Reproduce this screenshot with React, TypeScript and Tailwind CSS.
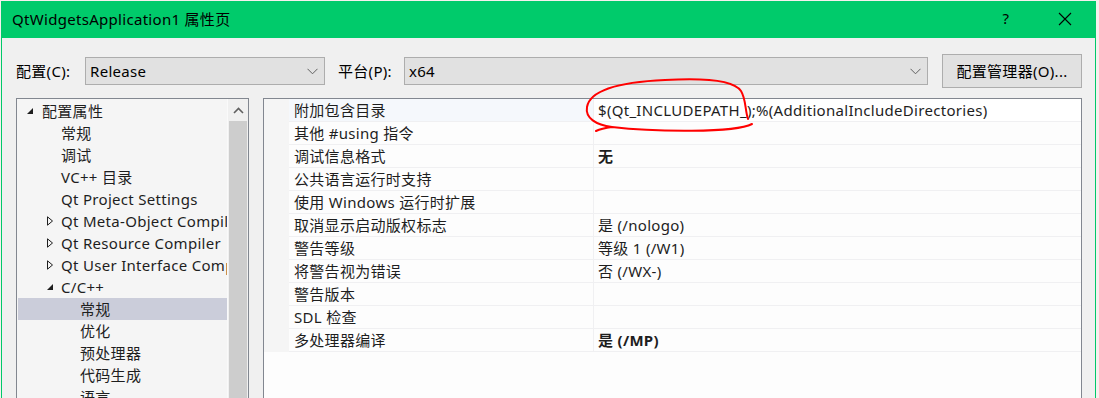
import React from "react";

const FONT = "font-['Noto_Sans','Noto_Sans_CJK_SC',sans-serif] tracking-[0.3px]";

type TreeItem = { label: string; level: number; arrow?: "open" | "closed"; selected?: boolean };

const tree: TreeItem[] = [
  { label: "配置属性", level: 0, arrow: "open" },
  { label: "常规", level: 1 },
  { label: "调试", level: 1 },
  { label: "VC++ 目录", level: 1 },
  { label: "Qt Project Settings", level: 1 },
  { label: "Qt Meta-Object Compiler", level: 1, arrow: "closed" },
  { label: "Qt Resource Compiler", level: 1, arrow: "closed" },
  { label: "Qt User Interface Compiler", level: 1, arrow: "closed" },
  { label: "C/C++", level: 1, arrow: "open" },
  { label: "常规", level: 2, selected: true },
  { label: "优化", level: 2 },
  { label: "预处理器", level: 2 },
  { label: "代码生成", level: 2 },
  { label: "语言", level: 2 },
];

const props: { name: string; value: string; bold?: boolean }[] = [
  { name: "附加包含目录", value: "$(Qt_INCLUDEPATH_);%(AdditionalIncludeDirectories)" },
  { name: "其他 #using 指令", value: "" },
  { name: "调试信息格式", value: "无", bold: true },
  { name: "公共语言运行时支持", value: "" },
  { name: "使用 Windows 运行时扩展", value: "" },
  { name: "取消显示启动版权标志", value: "是 (/nologo)" },
  { name: "警告等级", value: "等级 1 (/W1)" },
  { name: "将警告视为错误", value: "否 (/WX-)" },
  { name: "警告版本", value: "" },
  { name: "SDL 检查", value: "" },
  { name: "多处理器编译", value: "是 (/MP)", bold: true },
];

function Chevron() {
  return (
    <svg width="11" height="7" viewBox="0 0 11 7" className="shrink-0">
      <path d="M0.5 0.8 L5.5 5.8 L10.5 0.8" fill="none" stroke="#606060" strokeWidth="1" />
    </svg>
  );
}

function Select({ value, className }: { value: string; className: string }) {
  return (
    <div
      className={`h-[28px] flex items-center justify-between pl-[4px] pr-[6px] bg-[#e1e1e1] border border-[#adadad] text-[15px] text-black ${className}`}
    >
      <span>{value}</span>
      <Chevron />
    </div>
  );
}

function Arrow({ kind }: { kind: "open" | "closed" }) {
  if (kind === "open") {
    return (
      <svg width="8" height="8" viewBox="0 0 8 8">
        <path d="M7 1 L7 7 L1 7 Z" fill="#1e1e1e" />
      </svg>
    );
  }
  return (
    <svg width="8" height="10" viewBox="0 0 8 10">
      <path d="M1.5 0.8 L6.5 5 L1.5 9.2 Z" fill="none" stroke="#1e1e1e" strokeWidth="1" />
    </svg>
  );
}

function TreePanel() {
  return (
    <div className="w-[233px] h-[320px] border border-[#828790] bg-[#f5f5f5] flex overflow-hidden">
      <div className="w-[210px] pt-px overflow-hidden">
        {tree.map((t, i) => (
          <div
            key={i}
            className={`h-[22px] flex items-center whitespace-nowrap text-[15px] text-[#1e1e1e] ${
              t.selected ? "bg-[#cbcdda] ml-px" : ""
            }`}
          >
            <div
              className={`shrink-0 flex items-center ${
                t.level === 0 ? "w-[25px] pl-[9px]" : t.level === 1 ? "w-[44px] pl-[29px]" : t.selected ? "w-[62px]" : "w-[63px]"
              }`}
            >
              {t.arrow && <Arrow kind={t.arrow} />}
            </div>
            <span>{t.label}</span>
          </div>
        ))}
      </div>
      <div className="w-[21px] bg-[#f0f0f0] border-l border-[#fafafa] flex flex-col">
        <div className="h-[22px] flex items-center justify-center">
          <svg width="11" height="7" viewBox="0 0 11 7">
            <path d="M1 6 L5.5 1.5 L10 6" fill="none" stroke="#606060" strokeWidth="1.6" />
          </svg>
        </div>
        <div className="flex-1 mx-px bg-[#cdcdcd]" />
      </div>
    </div>
  );
}

function GridPanel() {
  return (
    <div className="w-[819px] h-[320px] border border-[#828790] bg-[#fdfdfd] overflow-hidden">
      {props.map((p, i) => (
        <div key={i} className="h-[23px] flex text-[15px] text-[#1e1e1e]">
          <div className="w-[25px] shrink-0 bg-[#f5f5f5]" />
          <div
            className={`w-[305px] shrink-0 pl-[5px] flex items-center border-b border-r border-[#f0f0f2] ${
              i === 0 ? "bg-[#f5f8fc]" : "bg-[#fdfdfd]"
            }`}
          >
            {p.name}
          </div>
          <div
            className={`flex-1 pl-[4px] flex items-center border-b border-[#f0f0f2] ${
              p.bold ? "font-bold" : ""
            } ${i === 0 ? "bg-[#ffffff]" : ""}`}
          >
            {p.value}
          </div>
        </div>
      ))}
    </div>
  );
}

export default function App() {
  return (
    <div className={`relative w-[1099px] h-[398px] overflow-hidden bg-[#f6f0ee] pt-px pl-px ${FONT}`}>
      <div className="w-[1095px] h-[397px] border-l border-r border-[#00c96a] bg-[#f0f0f0] flex flex-col">
        <div className="h-[37px] shrink-0 bg-[#00cb6b] flex items-center pl-[10px] text-[15px] text-black">
          <span className="flex-1 leading-none -mt-[1px]">QtWidgetsApplication1 属性页</span>
          <span className="w-[16px] text-center text-[15px] leading-none mr-[44px] -mt-[2px]">?</span>
          <svg width="14" height="14" viewBox="0 0 14 14" className="mr-[23px] -mt-[2px]">
            <path d="M1 1 L13 13 M13 1 L1 13" stroke="#000" strokeWidth="1.1" />
          </svg>
        </div>

        <div className="h-[34px] mt-[16px] flex items-center pl-[14px] text-[15px] text-black">
          <span className="w-[69px]">配置(C):</span>
          <Select value="Release" className="w-[240px]" />
          <span className="ml-[13px] w-[66px]">平台(P):</span>
          <Select value="x64" className="w-[524px]" />
          <button className="ml-[14px] w-[140px] h-[34px] bg-[#e1e1e1] border border-[#adadad] text-[15px] text-black">
            配置管理器(O)...
          </button>
        </div>

        <div className="mt-[10px] pl-[14px] flex gap-[14px]">
          <TreePanel />
          <GridPanel />
        </div>
      </div>

      <svg className="absolute left-0 top-0 pointer-events-none" width="1099" height="398">
        <path
          d="M752 124 C 735 133, 655 132, 612 127 C 596 125, 585 118, 587 107 C 590 90, 620 82, 665 80 C 700 78, 733 79, 741 91 C 746 99, 745 110, 748 119 M612 127 C 604 128, 598 130, 596 131"
          fill="none"
          stroke="#f00"
          strokeWidth="2"
          strokeLinecap="round"
        />
      </svg>
    </div>
  );
}
